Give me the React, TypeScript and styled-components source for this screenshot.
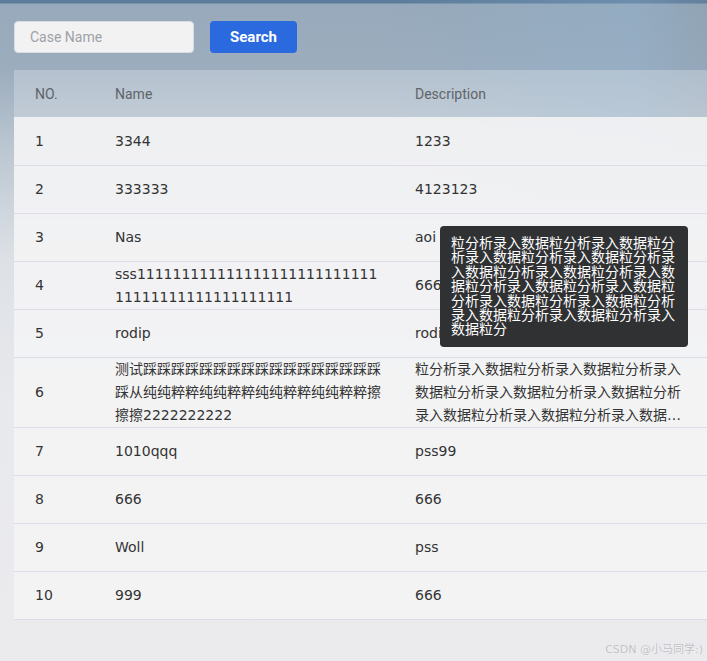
import * as React from "react";
import styled, { createGlobalStyle } from "styled-components";

interface Row {
  no: number;
  name: string;
  description: string;
}

const longText = "粒分析录入数据".repeat(14) + "粒分";

const rows: Array<Row> = [
  { no: 1, name: "3344", description: "1233" },
  { no: 2, name: "333333", description: "4123123" },
  { no: 3, name: "Nas", description: "aoi nsd" },
  { no: 4, name: "sss" + "1".repeat(47), description: "6666" },
  { no: 5, name: "rodip", description: "rodip" },
  {
    no: 6,
    name: "测试" + "踩".repeat(18) + "从" + "纯纯粹粹".repeat(4) + "擦擦擦" + "2222222222",
    description: longText,
  },
  { no: 7, name: "1010qqq", description: "pss99" },
  { no: 8, name: "666", description: "666" },
  { no: 9, name: "Woll", description: "pss" },
  { no: 10, name: "999", description: "666" },
];

const GlobalStyle = createGlobalStyle`
  html, body {
    margin: 0;
    padding: 0;
  }
  body {
    min-height: 661px;
    font-family: "DejaVu Sans", "Noto Sans CJK SC", sans-serif;
    background:
      linear-gradient(to right, rgba(150, 180, 205, 0) 55%, rgba(140, 175, 205, 0.35) 90%, rgba(120, 140, 160, 0.2) 100%) top / 100% 200px no-repeat,
      linear-gradient(to bottom, #5d7c9b 0, #5d7c9b 3px, #97a9ba 4px, #9cadbe 70px, #bcc7d1 150px, #dde1e6 260px, #e8e9ed 400px, #ebebee 661px);
  }
`;

const Page = styled.div`
  display: flex;
  flex-direction: column;
  padding: 21px 0 0 14px;
`;

const Toolbar = styled.div`
  display: flex;
  align-items: center;
  gap: 16px;
  margin-bottom: 17px;
`;

const SearchInput = styled.input`
  box-sizing: border-box;
  width: 180px;
  height: 32px;
  padding: 0 15px;
  border: 1px solid #d9dde3;
  border-radius: 4px;
  background: #f2f2f3;
  font-family: Roboto, "Liberation Sans", sans-serif;
  font-size: 14px;
  color: #333;
  outline: none;
  &::placeholder {
    color: #9ea2a8;
  }
`;

const SearchButton = styled.button`
  box-sizing: border-box;
  width: 87px;
  height: 32px;
  border: none;
  border-radius: 4px;
  background: #2a69de;
  color: #fff;
  font-family: Roboto, "Liberation Sans", sans-serif;
  font-size: 15px;
  font-weight: 700;
  cursor: pointer;
`;

const TableWrap = styled.div`
  position: relative;
`;

const Table = styled.table`
  width: 100%;
  border-collapse: collapse;
  table-layout: fixed;
`;

const HeadCell = styled.th`
  height: 47px;
  padding: 0 10px 0 21px;
  text-align: left;
  font-family: Roboto, "Liberation Sans", sans-serif;
  font-size: 14px;
  font-weight: 400;
  color: #5f6469;
  background: rgba(225, 232, 238, 0.35);
`;

const BodyRow = styled.tr`
  background: rgba(243, 243, 244, 0.93);
  border-bottom: 1px solid #dcdee7;
  &:first-child td {
    height: 48px;
  }
`;

const Cell = styled.td`
  height: 47px;
  padding: 0 11px 0 21px;
  font-size: 14px;
  line-height: 23px;
  color: #333;
  vertical-align: middle;
  word-break: break-all;
`;

const Clamp = styled.div`
  width: 268px;
  display: -webkit-box;
  -webkit-line-clamp: 3;
  -webkit-box-orient: vertical;
  overflow: hidden;
`;

const Tooltip = styled.div`
  position: absolute;
  left: 426px;
  top: 156px;
  box-sizing: border-box;
  width: 248px;
  padding: 10px 11px;
  border-radius: 4px;
  background: #303133;
  color: #fff;
  font-size: 14px;
  line-height: 14.4px;
  word-break: break-all;
`;

const Footer = styled.div`
  display: flex;
  justify-content: flex-end;
  padding: 20px 4px 0 0;
  font-size: 11px;
  color: #bfc0c4;
  text-shadow: 0 0 1px #fff;
`;

export default function App() {
  return (
    <>
      <GlobalStyle />
      <Page>
        <Toolbar>
          <SearchInput placeholder="Case Name" />
          <SearchButton>Search</SearchButton>
        </Toolbar>
        <TableWrap>
          <Table>
            <colgroup>
              <col style={{ width: 80 }} />
              <col style={{ width: 300 }} />
              <col />
            </colgroup>
            <thead>
              <tr>
                <HeadCell>NO.</HeadCell>
                <HeadCell>Name</HeadCell>
                <HeadCell>Description</HeadCell>
              </tr>
            </thead>
            <tbody>
              {rows.map((r) => (
                <BodyRow key={r.no}>
                  <Cell>{r.no}</Cell>
                  <Cell>{r.name}</Cell>
                  <Cell>
                    <Clamp>{r.description}</Clamp>
                  </Cell>
                </BodyRow>
              ))}
            </tbody>
          </Table>
          <Tooltip>{longText}</Tooltip>
        </TableWrap>
        <Footer>CSDN @小马同学:)</Footer>
      </Page>
    </>
  );
}
